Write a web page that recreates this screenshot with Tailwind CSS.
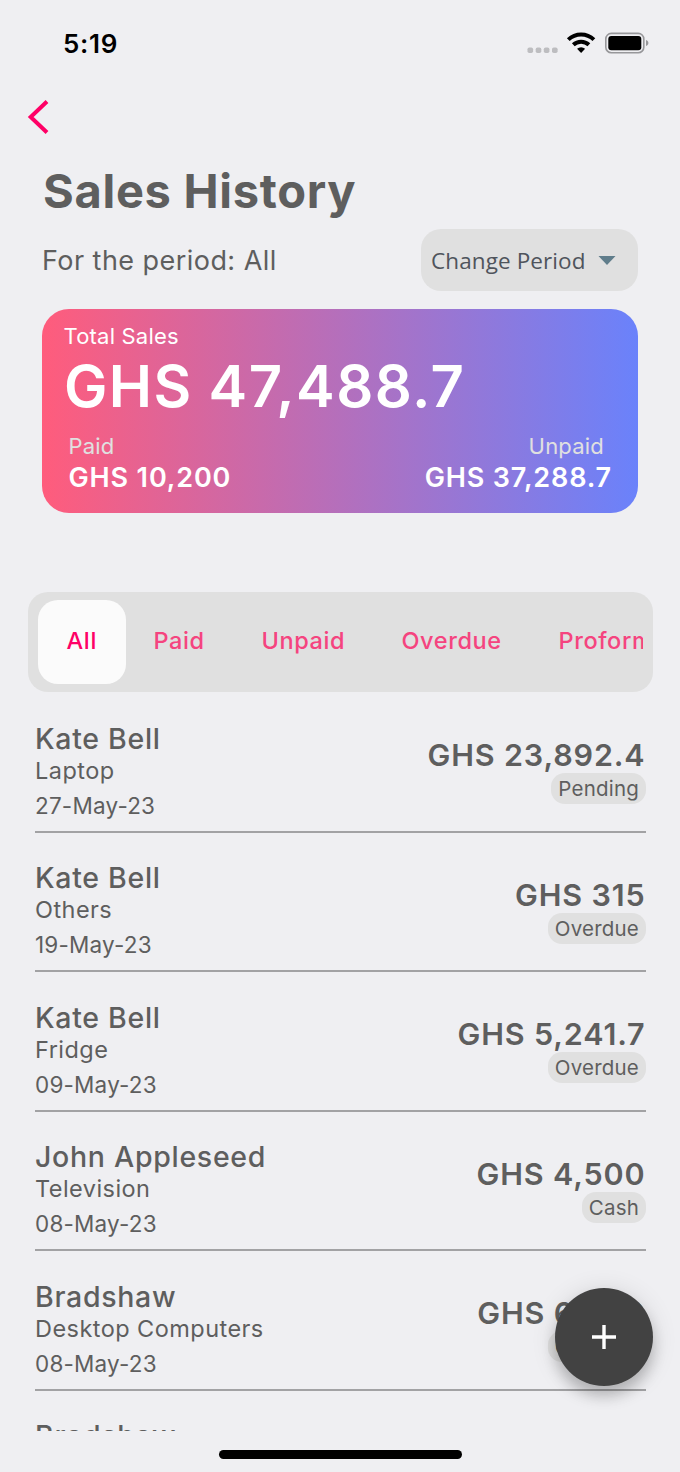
<!DOCTYPE html>
<html lang="en">
<head>
<meta charset="utf-8">
<title>Sales History</title>
<script src="https://cdn.jsdelivr.net/npm/@tailwindcss/browser@4"></script>
</head>
<body class="bg-[#efeff2]">
<div class="relative w-[680px] h-[1472px] bg-[#efeff2] overflow-hidden flex flex-col font-['Inter',sans-serif] text-[#5e5e5e] whitespace-nowrap">
  <header class="h-[87px] shrink-0 flex items-center justify-between pl-[63px] pr-[30px]">
    <span class="text-[26px] font-semibold text-black leading-[30px] tracking-[0.7px]">5:19</span>
    <svg class="w-[123px] h-[26px] mb-[2px]" viewBox="0 0 123 26">
      <g fill="#bdbdc0"><rect x="0.500" y="17.500" width="5.600" height="5.600" rx="1.800"/><rect x="8.700" y="17.500" width="5.600" height="5.600" rx="1.800"/><rect x="16.800" y="17.500" width="5.600" height="5.600" rx="1.800"/><rect x="25" y="17.500" width="5.600" height="5.600" rx="1.800"/></g>
      <g fill="none" stroke="#000" stroke-width="4"><path d="M41.300 9.600a18.600 18.600 0 0 1 25.600 0"/><path d="M46.300 14.800a11.400 11.400 0 0 1 15.600 0"/></g>
      <path d="M50.100 18.700a6 6 0 0 1 8 0l-4 4.200z" fill="#000"/>
      <rect x="78.800" y="3.400" width="38" height="19.400" rx="5.600" fill="none" stroke="#97979a" stroke-width="1.600"/>
      <rect x="81.300" y="5.900" width="33" height="14.400" rx="3" fill="#000"/>
      <path d="M119 10c3.200 1 3.200 5 0 6z" fill="#97979a"/>
    </svg>
  </header>
  <nav class="h-[73px] shrink-0 pl-[27px] pt-[11px]">
    <svg class="w-[24px] h-[38px]" viewBox="0 0 24 38" fill="none" stroke="#ff0066" stroke-width="4"><path d="M20 3.500L3.700 19 20 34.500"/></svg>
  </nav>
  <h1 class="h-[62px] shrink-0 pl-[43px] text-[47px] leading-[62px] font-bold tracking-[0.7px]">Sales History</h1>
  <div class="mt-[7px] h-[62px] shrink-0 flex items-center justify-between pl-[42px] pr-[42px]">
    <span class="pt-[2px] text-[27px] font-normal tracking-[0.45px]">For the period: All</span>
    <button class="w-[217px] h-[62px] rounded-[20px] bg-[#e0e0e0] flex items-center pl-[10px] pt-[1px] font-['Open_Sans',sans-serif] text-[22.500px] tracking-[0.1px] text-[#4f545c]">Change Period
      <svg class="ml-[12px] w-[18px] h-[9px]" viewBox="0 0 18 9"><path d="M0.500 0h17L9 9z" fill="#607d8b"/></svg>
    </button>
  </div>
  <section class="mt-[18px] mx-[42px] h-[204px] shrink-0 rounded-[27px] bg-linear-to-r/srgb from-[#ff5c7c] to-[#6a82fb] text-white flex flex-col">
    <p class="mt-[12px] pl-[21.500px] text-[22px] leading-[30px] tracking-[0.2px]">Total Sales</p>
    <p class="pl-[22px] text-[58px] leading-[70px] font-semibold tracking-[1.4px]">GHS 47,488.7</p>
    <div class="mt-[10px] flex justify-between pl-[26.500px] pr-[27px] text-[22px] leading-[30px] text-[#e0e0e0] tracking-[0.2px]"><span>Paid</span><span class="pr-[7px]">Unpaid</span></div>
    <div class="flex justify-between pl-[26.500px] pr-[26px] text-[27px] leading-[33px] font-semibold tracking-[0.85px]"><span>GHS 10,200</span><span>GHS 37,288.7</span></div>
  </section>
  <section class="mt-[79px] mx-[28px] w-[624.500px] h-[100px] shrink-0 rounded-[20px] bg-[#e0e0e0] px-[10px] pt-[8px]">
    <div class="flex overflow-hidden h-[84px] leading-[82px] text-[23.500px] font-[480] text-[#f5447f] tracking-[0.6px]">
      <div class="w-[87.500px] shrink-0 rounded-[20px] bg-[#fbfbfb] text-[#ff0066] text-center">All</div>
      <div class="w-[108px] shrink-0 pl-[28px]">Paid</div>
      <div class="w-[140px] shrink-0 pl-[28px]">Unpaid</div>
      <div class="w-[157px] shrink-0 pl-[28px]">Overdue</div>
      <div class="shrink-0 pl-[28px]">Proforma</div>
    </div>
  </section>
  <main id="list" class="h-[738.500px] shrink-0 overflow-hidden pl-[35px] pr-[34px] pt-[1px]"></main>
  <button class="absolute left-[554.700px] top-[1288px] w-[98px] h-[98px] rounded-full bg-[#424242] shadow-[0_10px_14px_rgba(0,0,0,0.2),0_3px_26px_rgba(0,0,0,0.12)] flex items-center justify-center" aria-label="Add">
    <svg class="w-[24px] h-[24px]" viewBox="0 0 24 24" fill="none" stroke="#fff" stroke-width="3.400"><path d="M12 0v24M0 12h24"/></svg>
  </button>
  <div class="mt-auto mb-[13px] ml-[219px] w-[243px] h-[9px] shrink-0 rounded-full bg-black"></div>
</div>
<script>
const sales = [
  ["Kate Bell", "Laptop", "27-May-23", "GHS 23,892.4", "Pending"],
  ["Kate Bell", "Others", "19-May-23", "GHS 315", "Overdue"],
  ["Kate Bell", "Fridge", "09-May-23", "GHS 5,241.7", "Overdue"],
  ["John Appleseed", "Television", "08-May-23", "GHS 4,500", "Cash"],
  ["Bradshaw", "Desktop Computers", "08-May-23", "GHS 6,500", "Overdue"],
  ["Bradshaw", "Laptop", "08-May-23", "GHS 2,000", "Cash"],
];
document.getElementById("list").innerHTML = sales.map(([name, item, date, amount, status]) => `
  <article class="h-[139.600px] flex flex-col">
    <div class="flex justify-between h-[137.600px] shrink-0">
      <div class="pt-[31.500px]">
        <p class="text-[28.500px] leading-[28px] font-[480] tracking-[0.7px]">${name}</p>
        <p class="text-[23.500px] leading-[36px] tracking-[0.45px]">${item}</p>
        <p class="text-[22.500px] leading-[34px] tracking-[0.2px]">${date}</p>
      </div>
      <div class="pt-[44px] flex flex-col items-end">
        <p class="pr-[0.500px] text-[30.500px] leading-[36px] font-semibold tracking-[0.85px]">${amount}</p>
        <span class="h-[31px] px-[7px] rounded-[14px] bg-[#e0e0e0] text-[20.500px] leading-[31px] tracking-[0.2px]">${status}</span>
      </div>
    </div>
    <div class="h-[2px] shrink-0 bg-[#a2a2a4]"></div>
  </article>`).join("");
</script>
</body>
</html>
